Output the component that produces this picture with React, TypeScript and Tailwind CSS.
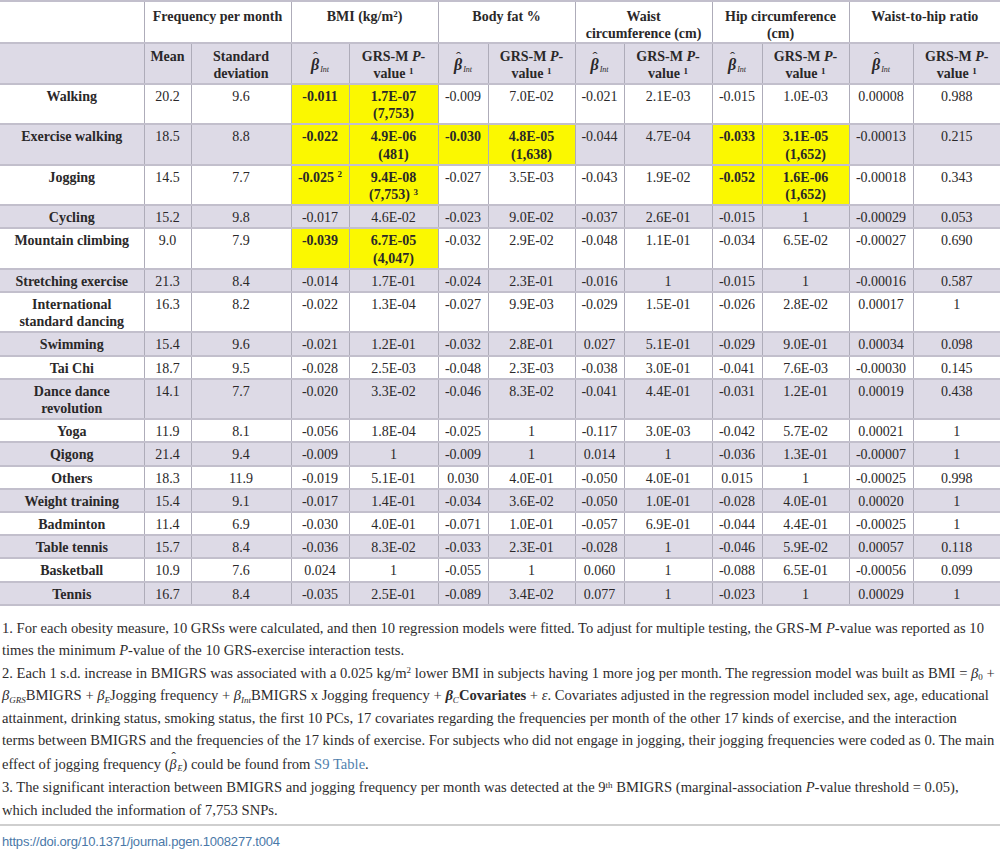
import type { ReactNode } from "react";

type Cell = { v: ReactNode; hl?: boolean };

const y = (v: ReactNode): Cell => ({ v, hl: true });
const c = (v: ReactNode): Cell => ({ v });

const two = (a: string, b: ReactNode) => (
  <>
    {a}
    <br />
    {b}
  </>
);

const rows: { name: ReactNode; mean: string; sd: string; cells: Cell[] }[] = [
  {
    name: "Walking",
    mean: "20.2",
    sd: "9.6",
    cells: [y("-0.011"), y(two("1.7E-07", "(7,753)")), c("-0.009"), c("7.0E-02"), c("-0.021"), c("2.1E-03"), c("-0.015"), c("1.0E-03"), c("0.00008"), c("0.988")],
  },
  {
    name: "Exercise walking",
    mean: "18.5",
    sd: "8.8",
    cells: [y("-0.022"), y(two("4.9E-06", "(481)")), y("-0.030"), y(two("4.8E-05", "(1,638)")), c("-0.044"), c("4.7E-04"), y("-0.033"), y(two("3.1E-05", "(1,652)")), c("-0.00013"), c("0.215")],
  },
  {
    name: "Jogging",
    mean: "14.5",
    sd: "7.7",
    cells: [
      y(<>-0.025 <sup className="text-[9px]">2</sup></>),
      y(two("9.4E-08", <>(7,753) <sup className="text-[9px]">3</sup></>)),
      c("-0.027"), c("3.5E-03"), c("-0.043"), c("1.9E-02"), y("-0.052"), y(two("1.6E-06", "(1,652)")), c("-0.00018"), c("0.343"),
    ],
  },
  {
    name: "Cycling",
    mean: "15.2",
    sd: "9.8",
    cells: [c("-0.017"), c("4.6E-02"), c("-0.023"), c("9.0E-02"), c("-0.037"), c("2.6E-01"), c("-0.015"), c("1"), c("-0.00029"), c("0.053")],
  },
  {
    name: "Mountain climbing",
    mean: "9.0",
    sd: "7.9",
    cells: [y("-0.039"), y(two("6.7E-05", "(4,047)")), c("-0.032"), c("2.9E-02"), c("-0.048"), c("1.1E-01"), c("-0.034"), c("6.5E-02"), c("-0.00027"), c("0.690")],
  },
  {
    name: "Stretching exercise",
    mean: "21.3",
    sd: "8.4",
    cells: [c("-0.014"), c("1.7E-01"), c("-0.024"), c("2.3E-01"), c("-0.016"), c("1"), c("-0.015"), c("1"), c("-0.00016"), c("0.587")],
  },
  {
    name: two("International", "standard dancing"),
    mean: "16.3",
    sd: "8.2",
    cells: [c("-0.022"), c("1.3E-04"), c("-0.027"), c("9.9E-03"), c("-0.029"), c("1.5E-01"), c("-0.026"), c("2.8E-02"), c("0.00017"), c("1")],
  },
  {
    name: "Swimming",
    mean: "15.4",
    sd: "9.6",
    cells: [c("-0.021"), c("1.2E-01"), c("-0.032"), c("2.8E-01"), c("0.027"), c("5.1E-01"), c("-0.029"), c("9.0E-01"), c("0.00034"), c("0.098")],
  },
  {
    name: "Tai Chi",
    mean: "18.7",
    sd: "9.5",
    cells: [c("-0.028"), c("2.5E-03"), c("-0.048"), c("2.3E-03"), c("-0.038"), c("3.0E-01"), c("-0.041"), c("7.6E-03"), c("-0.00030"), c("0.145")],
  },
  {
    name: two("Dance dance", "revolution"),
    mean: "14.1",
    sd: "7.7",
    cells: [c("-0.020"), c("3.3E-02"), c("-0.046"), c("8.3E-02"), c("-0.041"), c("4.4E-01"), c("-0.031"), c("1.2E-01"), c("0.00019"), c("0.438")],
  },
  {
    name: "Yoga",
    mean: "11.9",
    sd: "8.1",
    cells: [c("-0.056"), c("1.8E-04"), c("-0.025"), c("1"), c("-0.117"), c("3.0E-03"), c("-0.042"), c("5.7E-02"), c("0.00021"), c("1")],
  },
  {
    name: "Qigong",
    mean: "21.4",
    sd: "9.4",
    cells: [c("-0.009"), c("1"), c("-0.009"), c("1"), c("0.014"), c("1"), c("-0.036"), c("1.3E-01"), c("-0.00007"), c("1")],
  },
  {
    name: "Others",
    mean: "18.3",
    sd: "11.9",
    cells: [c("-0.019"), c("5.1E-01"), c("0.030"), c("4.0E-01"), c("-0.050"), c("4.0E-01"), c("0.015"), c("1"), c("-0.00025"), c("0.998")],
  },
  {
    name: "Weight training",
    mean: "15.4",
    sd: "9.1",
    cells: [c("-0.017"), c("1.4E-01"), c("-0.034"), c("3.6E-02"), c("-0.050"), c("1.0E-01"), c("-0.028"), c("4.0E-01"), c("0.00020"), c("1")],
  },
  {
    name: "Badminton",
    mean: "11.4",
    sd: "6.9",
    cells: [c("-0.030"), c("4.0E-01"), c("-0.071"), c("1.0E-01"), c("-0.057"), c("6.9E-01"), c("-0.044"), c("4.4E-01"), c("-0.00025"), c("1")],
  },
  {
    name: "Table tennis",
    mean: "15.7",
    sd: "8.4",
    cells: [c("-0.036"), c("8.3E-02"), c("-0.033"), c("2.3E-01"), c("-0.028"), c("1"), c("-0.046"), c("5.9E-02"), c("0.00057"), c("0.118")],
  },
  {
    name: "Basketball",
    mean: "10.9",
    sd: "7.6",
    cells: [c("0.024"), c("1"), c("-0.055"), c("1"), c("0.060"), c("1"), c("-0.088"), c("6.5E-01"), c("-0.00056"), c("0.099")],
  },
  {
    name: "Tennis",
    mean: "16.7",
    sd: "8.4",
    cells: [c("-0.035"), c("2.5E-01"), c("-0.089"), c("3.4E-02"), c("0.077"), c("1"), c("-0.023"), c("1"), c("0.00029"), c("1")],
  },
];

const widths = [144, 47, 100, 58, 89, 50, 87, 49, 88, 50, 87, 64, 87];

// beta with a hat accent laid over it
function BetaHat({ bold, size, sub, hat }: { bold?: boolean; size: string; sub: string; hat: string }) {
  return (
    <span className="whitespace-nowrap">
      <span className={`relative inline-block italic ${size} ${bold ? "font-bold" : ""}`}>
        β
        <span className={`absolute left-[2px] font-normal not-italic leading-none ${hat}`}>ˆ</span>
      </span>
      <sub className="ml-[1px] text-[8px] italic font-normal">{sub}</sub>
    </span>
  );
}

function PHead() {
  return (
    <>
      GRS-M <i>P</i>-
      <br />
      value <sup className="text-[9px]">1</sup>
    </>
  );
}

const b = "border-l border-[#aeacb9]";
const rowB = "border-b-2 border-[#c2bfcc]";
const shade = "bg-[#dddae6]";
const cellPad = "pt-[3px] pb-[1px] align-top leading-[17.2px]";

export default function App() {
  return (
    <div className="w-[1000px] bg-white font-['Liberation_Serif',serif] text-[14px] text-[#2a2829]">
      <table className="w-[1000px] table-fixed border-collapse text-center">
        <colgroup>
          {widths.map((w, i) => (
            <col key={i} style={{ width: w }} />
          ))}
        </colgroup>
        <thead className="font-bold">
          <tr className={`border-t-2 border-[#c2bfcc] ${rowB}`}>
            <th className="align-top" />
            <th colSpan={2} className={`${b} px-1 pt-[6px] align-top leading-[17px]`}>
              Frequency per month
            </th>
            <th colSpan={2} className={`${b} px-1 pt-[6px] align-top leading-[17px]`}>
              BMI (kg/m<sup className="text-[9px]">2</sup>)
            </th>
            <th colSpan={2} className={`${b} px-1 pt-[6px] align-top leading-[17px]`}>
              Body fat %
            </th>
            <th colSpan={2} className={`${b} px-1 pt-[6px] align-top leading-[17px]`}>
              Waist
              <br />
              circumference (cm)
            </th>
            <th colSpan={2} className={`${b} px-1 pt-[6px] align-top leading-[17px]`}>
              Hip circumference
              <br />
              (cm)
            </th>
            <th colSpan={2} className={`${b} px-1 pt-[6px] align-top leading-[17px]`}>
              Waist-to-hip ratio
            </th>
          </tr>
          <tr className={`${shade} ${rowB}`}>
            <th className="pt-[4px] pb-[1px] align-top leading-[17px]" />
            <th className={`${b} pt-[4px] pb-[1px] align-top leading-[17px]`}>Mean</th>
            <th className={`${b} pt-[4px] pb-[1px] align-top leading-[17px]`}>
              Standard
              <br />
              deviation
            </th>
            {[0, 1, 2, 3, 4].map((k) => [
              <th key={`b${k}`} className={`${b} pt-[12px] align-top leading-[17px]`}>
                <BetaHat bold size="text-[16px]" sub="Int" hat="-top-[6px] text-[15px]" />
              </th>,
              <th key={`p${k}`} className={`${b} pt-[4px] pb-[1px] align-top leading-[17px]`}>
                <PHead />
              </th>,
            ])}
          </tr>
        </thead>
        <tbody>
          {rows.map((r, i) => (
            <tr key={i} className={`${rowB} ${i % 2 === 1 ? shade : "bg-white"}`}>
              <td className={`px-1 font-bold ${cellPad}`}>{r.name}</td>
              <td className={`${b} ${cellPad}`}>{r.mean}</td>
              <td className={`${b} ${cellPad}`}>{r.sd}</td>
              {r.cells.map((cell, j) => (
                <td key={j} className={`${b} ${cellPad} ${cell.hl ? "bg-[#fbf800] font-bold" : ""}`}>
                  {cell.v}
                </td>
              ))}
            </tr>
          ))}
        </tbody>
      </table>

      <div className="mt-[11px] pl-[2px] text-[14.6px] leading-[22.5px] text-[#2e2c2d]">
        <div className="whitespace-nowrap">
          1. For each obesity measure, 10 GRSs were calculated, and then 10 regression models were fitted. To adjust for multiple testing, the GRS-M <i>P</i>-value was reported as 10
        </div>
        <div className="whitespace-nowrap">
          times the minimum <i>P</i>-value of the 10 GRS-exercise interaction tests.
        </div>
        <div className="whitespace-nowrap">
          2. Each 1 s.d. increase in BMIGRS was associated with a 0.025 kg/m<sup className="text-[9px]">2</sup> lower BMI in subjects having 1 more jog per month. The regression model was built as BMI = <i>β</i>
          <sub className="text-[9px]">0</sub> +
        </div>
        <div className="whitespace-nowrap">
          <i>β</i>
          <sub className="text-[9px] italic">GRS</sub>BMIGRS + <i>β</i>
          <sub className="text-[9px] italic">E</sub>Jogging frequency + <i>β</i>
          <sub className="text-[9px] italic">Int</sub>BMIGRS x Jogging frequency + <b><i>β</i></b>
          <sub className="text-[9px] italic">C</sub>
          <b>Covariates</b> + <i>ε</i>. Covariates adjusted in the regression model included sex, age, educational
        </div>
        <div className="whitespace-nowrap">
          attainment, drinking status, smoking status, the first 10 PCs, 17 covariates regarding the frequencies per month of the other 17 kinds of exercise, and the interaction
        </div>
        <div className="whitespace-nowrap">
          terms between BMIGRS and the frequencies of the 17 kinds of exercise. For subjects who did not engage in jogging, their jogging frequencies were coded as 0. The main
        </div>
        <div className="whitespace-nowrap pt-[1px]">
          effect of jogging frequency (<BetaHat size="text-[14px]" sub="E" hat="-top-[4px] text-[13px]" />) could be found from{" "}
          <span className="text-[#4f7fae]">S9 Table</span>.
        </div>
        <div className="whitespace-nowrap">
          3. The significant interaction between BMIGRS and jogging frequency per month was detected at the 9<sup className="text-[9px]">th</sup> BMIGRS (marginal-association <i>P</i>-value threshold = 0.05),
        </div>
        <div className="whitespace-nowrap">which included the information of 7,753 SNPs.</div>
      </div>

      <div className="mt-[3px] border-t-2 border-[#cfcfcf] pl-[2px] pt-[8px] font-['Liberation_Sans',sans-serif] text-[13px] leading-[16px] tracking-[-0.2px] text-[#4a78a8]">
        https://doi.org/10.1371/journal.pgen.1008277.t004
      </div>
    </div>
  );
}
